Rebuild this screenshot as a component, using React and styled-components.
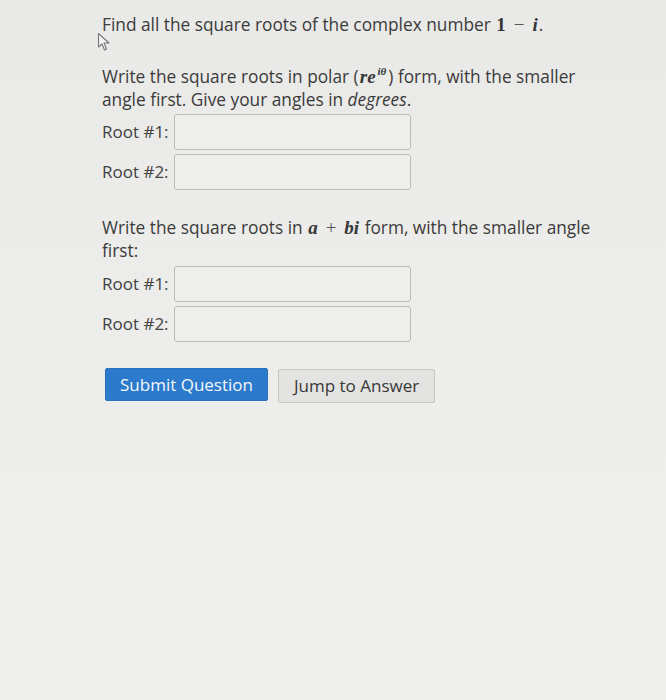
import React from 'react';
import styled, { createGlobalStyle } from 'styled-components';

const Global = createGlobalStyle`
  body {
    margin: 0;
    background: #ebebe9;
    font-family: "Open Sans", "Noto Sans", sans-serif;
    color: #3b3b3b;
  }
`;

const Page = styled.div`
  position: relative;
  height: 700px;
  padding: 13px 0 0 102px;
  box-sizing: border-box;
  background: linear-gradient(180deg, #e9e9e7 0%, #ededeb 50%, #efefee 100%);
`;

const Para = styled.p`
  margin: ${(p) => p.$top || 0}px 0 0;
  font-size: 17.3px;
  line-height: 23.5px;
  width: ${(p) => p.$width || 500}px;
`;

const M = styled.span`
  display: inline-block;
  padding: 0 1px;
  font-family: "Liberation Serif", "DejaVu Serif", serif;
  font-weight: bold;
  font-style: ${(p) => (p.$up ? 'normal' : 'italic')};
  font-size: ${(p) => p.$size || 19}px;
  line-height: 1;
  color: #363636;
`;

const Op = styled.span`
  display: inline-block;
  font-family: "Liberation Serif", serif;
  font-size: 19px;
  line-height: 1;
  margin: 0 7px;
  color: #555;
`;

const Sup = styled.sup`
  display: inline-block;
  font-size: 11px;
  line-height: 1;
  vertical-align: 8px;
  margin-right: 1px;
`;

const Rows = styled.div`
  display: flex;
  flex-direction: column;
  gap: 4px;
  margin-top: ${(p) => p.$top || 0}px;
`;

const Row = styled.label`
  display: flex;
  align-items: center;
  gap: 5px;
  font-size: 17px;
`;

const Label = styled.span`
  width: 67px;
  white-space: nowrap;
  color: #414141;
`;

const Box = styled.input`
  width: 237px;
  height: 36px;
  box-sizing: border-box;
  border: 1px solid #bcbcbb;
  border-radius: 3px;
  background: #eeeeed;
  outline: none;
`;

const Buttons = styled.div`
  display: flex;
  align-items: flex-start;
  gap: 10px;
  margin-top: 26px;
`;

const Button = styled.button`
  font-family: "Open Sans", sans-serif;
  font-size: 17px;
  height: ${(p) => (p.$primary ? 33 : 34)}px;
  padding: 0 ${(p) => (p.$primary ? 14 : 15)}px;
  border-radius: 2px;
  border: 1px solid ${(p) => (p.$primary ? '#2a72bd' : '#c6c6c5')};
  background: ${(p) => (p.$primary ? '#2c7acb' : '#e3e3e2')};
  color: ${(p) => (p.$primary ? '#f4f7fb' : '#383838')};
  margin-left: ${(p) => (p.$primary ? 3 : 0)}px;
  margin-top: ${(p) => (p.$primary ? 0 : 1)}px;
`;

const Cursor = styled.svg`
  position: absolute;
  left: 97px;
  top: 32px;
`;

export default function App() {
  return (
    <Page>
      <Global />
      <Para $width={560}>
        Find all the square roots of the complex number <M $up>1</M>
        <Op>−</Op>
        <M>i</M>.
      </Para>
      <Cursor width="16" height="20" viewBox="0 0 16 20">
        <path d="M1.5 1.5 L1.5 15 L5 12 L7.5 18 L9.5 17 L7 11 L12 11 Z" fill="#f3f3f3" stroke="#777" strokeWidth="1.1" strokeLinejoin="round" />
      </Cursor>
      <Para $top={28} $width={492}>
        Write the square roots in polar (<M>re</M>
        <Sup>
          <M $size={11}>iθ</M>
        </Sup>
        ) form, with the smaller angle first. Give your angles in <i>degrees</i>.
      </Para>
      <Rows $top={2}>
        <Row>
          <Label>Root #1:</Label>
          <Box />
        </Row>
        <Row>
          <Label>Root #2:</Label>
          <Box />
        </Row>
      </Rows>
      <Para $top={26} $width={505}>
        Write the square roots in <M>a</M>
        <Op>+</Op>
        <M>bi</M> form, with the smaller angle first:
      </Para>
      <Rows $top={3}>
        <Row>
          <Label>Root #1:</Label>
          <Box />
        </Row>
        <Row>
          <Label>Root #2:</Label>
          <Box />
        </Row>
      </Rows>
      <Buttons>
        <Button $primary>Submit Question</Button>
        <Button>Jump to Answer</Button>
      </Buttons>
    </Page>
  );
}
